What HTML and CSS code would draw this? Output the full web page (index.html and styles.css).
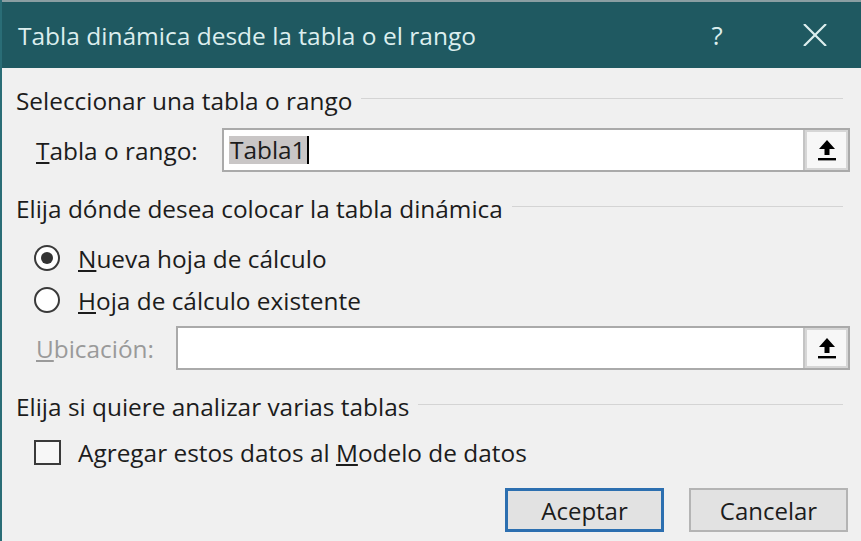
FILE: index.html
```html
<!DOCTYPE html>
<html lang="es">
<head>
<meta charset="utf-8">
<link rel="stylesheet" href="styles.css">
</head>
<body>
<div class="dialog">
  <div class="titlebar">
    <span class="title">Tabla dinámica desde la tabla o el rango</span>
    <span class="help">?</span>
    <span class="close">
      <svg width="24" height="22" viewBox="0 0 24 22"><path d="M1 0 L23 22 M23 0 L1 22" stroke="#dceeee" stroke-width="2.2" fill="none"/></svg>
    </span>
  </div>
  <div class="content">
    <div class="section s1"><span>Seleccionar una tabla o rango</span><span class="rule"></span></div>
    <div class="field-row r1">
      <span class="label l1"><u>T</u>abla o rango:</span>
      <div class="input">
        <span class="value"><span class="sel">Tabla1</span><span class="caret"></span></span>
        <span class="pick">
          <svg width="20" height="22" viewBox="0 0 20 22"><path d="M10 1 L18 10 L12.5 10 L12.5 16 L7.5 16 L7.5 10 L2 10 Z" fill="#000"/><rect x="1" y="19" width="18" height="2.4" fill="#000"/></svg>
        </span>
      </div>
    </div>
    <div class="section s2"><span>Elija dónde desea colocar la tabla dinámica</span><span class="rule"></span></div>
    <div class="option o1"><span class="radio checked"></span><span><u>N</u>ueva hoja de cálculo</span></div>
    <div class="option o2"><span class="radio"></span><span><u>H</u>oja de cálculo existente</span></div>
    <div class="field-row r2">
      <span class="label l2 disabled"><u>U</u>bicación:</span>
      <div class="input">
        <span class="value"></span>
        <span class="pick">
          <svg width="20" height="22" viewBox="0 0 20 22"><path d="M10 1 L18 10 L12.5 10 L12.5 16 L7.5 16 L7.5 10 L2 10 Z" fill="#000"/><rect x="1" y="19" width="18" height="2.4" fill="#000"/></svg>
        </span>
      </div>
    </div>
    <div class="section s3"><span>Elija si quiere analizar varias tablas</span><span class="rule"></span></div>
    <div class="option o3"><span class="check"></span><span>Agregar estos datos al <u>M</u>odelo de datos</span></div>
    <div class="buttons">
      <button class="btn primary">Aceptar</button>
      <button class="btn">Cancelar</button>
    </div>
  </div>
</div>
</body>
</html>
```
FILE: styles.css
```css
html, body {
  margin: 0;
  padding: 0;
  background: #f0f0f0;
}
body {
  font-family: "Open Sans", "Noto Sans", sans-serif;
  color: #1c1c1c;
}
.dialog {
  width: 861px;
  height: 541px;
  overflow: hidden;
  background: #f0f0f0;
  box-sizing: border-box;
  border-left: 2px solid #2a6d76;
}
.titlebar {
  height: 66px;
  border-top: 2px solid #8a9ea2;
  background: #1f5961;
  display: flex;
  align-items: center;
  color: #dceeee;
  padding-left: 16px;
}
.title {
  font-size: 24.5px;
  flex: 1;
  padding-top: 1px;
}
.help {
  font-size: 26px;
  width: 30px;
  margin-right: 71px;
  text-align: center;
}
.close {
  width: 24px;
  height: 22px;
  margin-right: 34px;
  display: flex;
}
.content {
  padding-left: 14px;
  padding-right: 11px;
  font-size: 24.4px;
}
.section {
  display: flex;
  align-items: center;
  height: 24px;
  padding-right: 7px;
}
.section .rule {
  flex: 1;
  border-top: 1px solid #d4d4d4;
  margin-left: 9px;
  margin-top: -3px;
}
.s1 { margin-top: 20px; }
.s2 { margin-top: 24px; }
.s3 { margin-top: 24px; }
.field-row {
  display: flex;
  align-items: center;
  height: 44px;
  margin-top: 16px;
}
.r2 { margin-top: 11px; }
.label {
  padding-left: 20px;
}
.l1 { width: 186px; }
.l2 { width: 140px; }
.disabled { color: #9a9a9a; }
.input {
  flex: 1;
  height: 44px;
  box-sizing: border-box;
  border: 2px solid #aaaaaa;
  background: #ffffff;
  display: flex;
}
.value {
  flex: 1;
  display: flex;
  align-items: center;
  padding-left: 5px;
}
.sel {
  background: #c9c6c6;
  padding: 0 1px;
  line-height: 28px;
}
.caret {
  width: 2px;
  height: 28px;
  background: #000;
}
.pick {
  width: 45px;
  box-sizing: border-box;
  border-left: 2px solid #c4c4c4;
  background: #f7f7f7;
  display: flex;
  align-items: center;
  justify-content: center;
  box-shadow: inset 0 0 0 2px #d6d6d6;
}
.option {
  display: flex;
  align-items: center;
  height: 30px;
  padding-left: 18px;
}
.o1 { margin-top: 23px; }
.o2 { margin-top: 12px; }
.o3 { margin-top: 19px; }
.radio {
  width: 26px;
  height: 26px;
  box-sizing: border-box;
  border: 2px solid #3a3a3a;
  border-radius: 50%;
  background: #ffffff;
  margin-right: 18px;
  display: flex;
  align-items: center;
  justify-content: center;
}
.radio.checked::after {
  content: "";
  width: 12px;
  height: 12px;
  border-radius: 50%;
  background: #333333;
}
.check {
  width: 27px;
  height: 25px;
  box-sizing: border-box;
  border: 2px solid #3a3a3a;
  background: #f7f7f7;
  margin-right: 17px;
}
.buttons {
  display: flex;
  justify-content: flex-end;
  gap: 25px;
  margin-top: 21px;
  padding-right: 2px;
}
.btn {
  width: 159px;
  height: 44px;
  box-sizing: border-box;
  font-family: "Open Sans", "Noto Sans", sans-serif;
  font-size: 24px;
  color: #1c1c1c;
  background: #e2e2e2;
  border: 2px solid #b4b4b4;
  padding: 0;
}
.btn.primary {
  border: 3px solid #2c6fb0;
}
```
